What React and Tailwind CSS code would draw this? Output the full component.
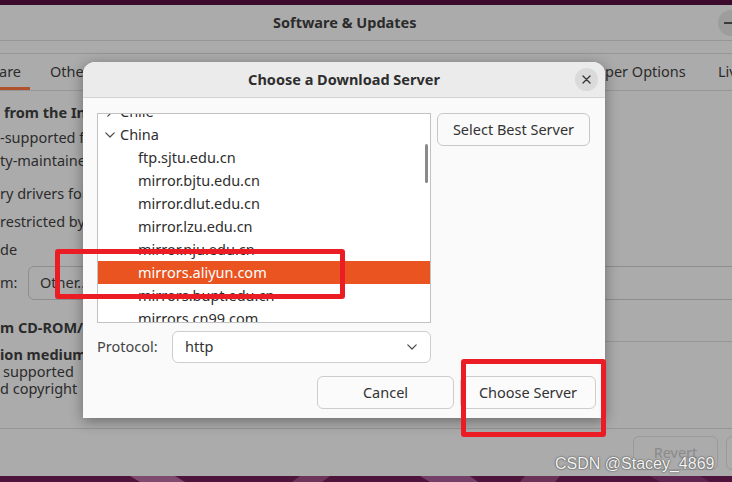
import React from "react";

function ChevronDown({ className = "" }) {
  return (
    <svg className={className} width="10" height="6" viewBox="0 0 10 6" fill="none">
      <path d="M0.8 0.8 L5 5 L9.2 0.8" stroke="#4a4a4a" strokeWidth="1.2" strokeLinecap="round" strokeLinejoin="round" />
    </svg>
  );
}

function ChevronRight({ className = "" }) {
  return (
    <svg className={className} width="6" height="10" viewBox="0 0 6 10" fill="none">
      <path d="M0.8 0.8 L5 5 L0.8 9.2" stroke="#4a4a4a" strokeWidth="1.2" strokeLinecap="round" strokeLinejoin="round" />
    </svg>
  );
}

const servers = [
  "ftp.sjtu.edu.cn",
  "mirror.bjtu.edu.cn",
  "mirror.dlut.edu.cn",
  "mirror.lzu.edu.cn",
  "mirror.nju.edu.cn",
  "mirrors.aliyun.com",
  "mirrors.bupt.edu.cn",
  "mirrors.cn99.com",
  "mirrors.cqu.edu.cn",
];

function BackgroundWindow() {
  return (
    <div className="h-[471px] bg-[#ababab] text-[#2b2b2b] flex flex-col overflow-hidden">
      {/* header bar */}
      <div className="h-[36px] shrink-0 flex items-center pl-[273px] relative border-b border-[#969696]">
        <span className="font-bold text-[14.5px] whitespace-nowrap">Software &amp; Updates</span>
        <div className="absolute left-[718px] top-[5px] w-[26px] h-[26px] rounded-full bg-[#9d9d9d] flex items-center justify-center">
          <div className="w-[9px] h-[1.5px] bg-[#3a3a3a] -ml-[6px]" />
        </div>
      </div>
      <div className="h-[13px] shrink-0 border-b border-[#969696]" />
      {/* tabs */}
      <div className="h-[37px] shrink-0 flex border-b border-[#969696] text-[14.5px] whitespace-nowrap">
        <div className="w-[30px] shrink-0 flex items-center border-b-[3px] border-[#b0532c] pt-[3px]">
          <span className="-ml-[1px]">are</span>
        </div>
        <div className="w-[575px] shrink-0 pl-[20px] flex items-center">Other Software</div>
        <div className="w-[113px] shrink-0 flex items-center">per Options</div>
        <div className="shrink-0 flex items-center">Livepatch</div>
      </div>
      {/* content */}
      <div className="flex flex-col text-[14.5px] whitespace-nowrap">
        <div className="mt-[12px] h-[20px] flex items-center font-bold pl-[4px]">from the Internet</div>
        <div className="mt-[5px] h-[20px] flex items-center">-supported free and open-source software</div>
        <div className="mt-[3px] h-[20px] flex items-center">ty-maintained free and open-source software</div>
        <div className="mt-[13px] h-[20px] flex items-center">ry drivers for devices</div>
        <div className="mt-[8px] h-[20px] flex items-center">restricted by copyright or legal issues</div>
        <div className="mt-[8px] h-[20px] flex items-center">de</div>
        <div className="mt-[6px] h-[34px] flex items-center">
          <span className="w-[28px] shrink-0">m:</span>
          <div className="w-[720px] shrink-0 h-[34px] rounded-l-[6px] border border-[#8e8e8e] flex items-center pl-[11px]">Other...</div>
        </div>
        <div className="mt-[18px] h-[20px] flex items-center font-bold">m CD-ROM/DVD</div>
        <div className="mt-[3px] ml-[605px] border-t border-[#969696]" />
        <div className="mt-[4px] h-[17px] flex items-center font-bold">ion medium</div>
        <div className="h-[17px] flex items-center pl-[3px]">supported</div>
        <div className="h-[17px] flex items-center">d copyright</div>
      </div>
      {/* bottom bar */}
      <div className="mt-[31px] border-t border-[#969696] flex-1 flex items-start pt-[7px] pl-[633px] gap-[8px]">
        <div className="w-[85px] h-[34px] shrink-0 rounded-[6px] border border-[#9a9a9a] flex items-center justify-center text-[#8a8a8a] text-[14.5px]">Revert</div>
        <div className="w-[60px] h-[34px] shrink-0 rounded-[6px] border border-[#9a9a9a]" />
      </div>
    </div>
  );
}

function Dialog() {
  return (
    <div className="absolute left-[83px] top-[62px] w-[522px] h-[356px] rounded-t-[12px] bg-[#fafafa] shadow-[0_3px_14px_rgba(0,0,0,0.38)] flex flex-col text-[#2e2e2e] text-[14.5px]">
      <div className="h-[36px] shrink-0 rounded-t-[12px] bg-[#ebebeb] border-b border-[#d2d2d2] flex items-center justify-center relative">
        <span className="font-bold text-[#2e2e2e]">Choose a Download Server</span>
        <div className="absolute right-[7px] top-[6px] w-[23px] h-[23px] rounded-full bg-[#dadada] flex items-center justify-center">
          <svg width="9" height="9" viewBox="0 0 9 9">
            <path d="M1 1 L8 8 M8 1 L1 8" stroke="#333" strokeWidth="1.3" strokeLinecap="round" />
          </svg>
        </div>
      </div>
      <div className="flex flex-col pt-[15px] pl-[14px] pr-[9px] pb-[9px]">
        <div className="flex gap-[6px]">
          <div className="relative w-[334px] h-[210px] border border-[#c2c2c2] bg-white overflow-hidden">
            <div className="-mt-[14px] flex flex-col">
              <div className="h-[23px] flex items-center">
                <div className="w-[22px] flex justify-center pl-[2px]"><ChevronRight /></div>
                <span>Chile</span>
              </div>
              <div className="h-[23px] flex items-center">
                <div className="w-[22px] flex justify-center pl-[2px]"><ChevronDown /></div>
                <span>China</span>
              </div>
              {servers.map((s) =>
                s === "mirrors.aliyun.com" ? (
                  <div key={s} className="h-[23px] flex items-center pl-[40px] bg-[#e95420] text-white">{s}</div>
                ) : (
                  <div key={s} className="h-[23px] flex items-center pl-[40px]">{s}</div>
                )
              )}
            </div>
            <div className="absolute right-[2px] top-[30px] w-[3px] h-[39px] rounded-full bg-[#8a8a8a]" />
          </div>
          <div className="flex flex-col">
            <div className="w-[153px] h-[33px] rounded-[6px] border border-[#c8c8c8] bg-[#fafafa] flex items-center justify-center text-[#333]">Select Best Server</div>
          </div>
        </div>
        <div className="mt-[8px] h-[32px] flex items-center">
          <span className="w-[75px] text-[#444]">Protocol:</span>
          <div className="w-[259px] h-[32px] rounded-[6px] border border-[#cdcdcd] bg-white flex items-center justify-between pl-[12px] pr-[13px]">
            <span className="text-[#333]">http</span>
            <ChevronDown />
          </div>
        </div>
        <div className="mt-[13px] flex justify-end gap-[6px]">
          <div className="w-[137px] h-[33px] rounded-[6px] border border-[#cdcdcd] bg-[#fbfbfb] flex items-center justify-center text-[#333]">Cancel</div>
          <div className="w-[136px] h-[33px] rounded-[6px] border border-[#cdcdcd] bg-[#fbfbfb] flex items-center justify-center text-[#333]">Choose Server</div>
        </div>
      </div>
    </div>
  );
}

export default function App() {
  return (
    <div className="relative w-[732px] h-[482px] overflow-hidden bg-[#4c1439] font-['Noto_Sans',sans-serif]">
      <div className="h-[5px] bg-[#3c0b2b]" />
      <BackgroundWindow />
      <svg className="block" width="732" height="6" viewBox="0 0 732 6">
        <rect width="732" height="6" fill="#4e143b" />
        <polygon points="130,0 175,0 185,6 140,6" fill="#7e4a6d" />
        <polygon points="300,0 330,0 322,6 292,6" fill="#6d3559" />
        <polygon points="420,0 470,0 478,6 430,6" fill="#74406a" />
        <polygon points="525,0 560,0 555,6 520,6" fill="#6a3357" />
        <polygon points="650,0 700,0 710,6 660,6" fill="#5e2550" />
      </svg>
      <Dialog />
      {/* annotations */}
      <div className="absolute left-[55px] top-[249px] w-[290px] h-[50px] border-[5px] border-[#ec1c24] rounded-[3px]" />
      <div className="absolute left-[461px] top-[359px] w-[145px] h-[78px] border-[5px] border-[#ec1c24] rounded-[3px]" />
      <div className="absolute left-[555px] top-[452px] text-[16px] font-['Liberation_Sans',sans-serif] text-[#f4f4f4] [text-shadow:0_0_2px_#4a4a4a,0_0_1px_#4a4a4a]">CSDN @Stacey_4869</div>
    </div>
  );
}
